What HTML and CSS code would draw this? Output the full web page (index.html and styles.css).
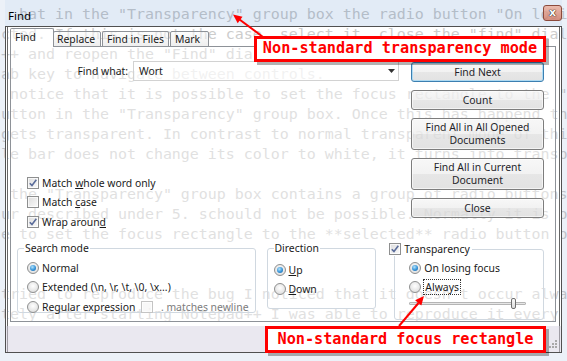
FILE: index.html
```html
<!DOCTYPE html>
<html>
<head>
<meta charset="utf-8">
<link rel="stylesheet" href="styles.css">
</head>
<body>
<pre class="doc">  hat in the "Transparency" group box the radio button "On losi
cted. If this is not the case, select it, close the "find" dial
++ and reopen the "Find" dialog. Then use the
ab key to navigate between controls.
 notice that it is possible to set the focus rectangle to the "
utton in the "Transparency" group box. Once this has happend th
gets transparent. In contrast to normal transparent mode of thi
le bar does not change its color to white, it turns into transp

 the "Transparency" group box contains a group of radio buttons
ur described under 5. schould not be possible. Normally it is o
e to set the focus rectangle to the **selected** radio button o


tried to reproduce the bug I noticed that it doesn't occur alwa
tely after starting Notepad++ I was able to reproduce it every</pre>

<div class="win">
  <div class="titlebar">
    <span class="title">Find</span>
    <span class="close">x</span>
  </div>
  <div class="client">
    <div class="tabs">
      <span class="tab active">Find</span>
      <span class="tab t-replace">Replace</span>
      <span class="tab t-files">Find in Files</span>
      <span class="tab t-mark">Mark</span>
    </div>
    <div class="panel">
      <div class="upper">
        <div class="left">
          <div class="findrow">
            <span class="findlabel">Find what:</span>
            <div class="combo">
              <span>Wort</span>
              <svg width="7" height="4" viewBox="0 0 7 4"><polygon points="0,0 7,0 3.5,4" fill="#333"/></svg>
            </div>
          </div>
          <div class="checks">
            <div class="check"><span class="cb"><svg width="10" height="10" viewBox="0 0 10 10"><path d="M1.8 5.2 L4 7.6 L8.3 1.8" fill="none" stroke="#5a6c9a" stroke-width="1.6"/></svg></span><span>Match <u>w</u>hole word only</span></div>
            <div class="check"><span class="cb"></span><span>Match <u>c</u>ase</span></div>
            <div class="check"><span class="cb"><svg width="10" height="10" viewBox="0 0 10 10"><path d="M1.8 5.2 L4 7.6 L8.3 1.8" fill="none" stroke="#5a6c9a" stroke-width="1.6"/></svg></span><span>Wrap aroun<u>d</u></span></div>
          </div>
        </div>
        <div class="buttons">
          <div class="btn default">Find Next</div>
          <div class="btn">Count</div>
          <div class="btn tall">Find All in All Opened<br>Documents</div>
          <div class="btn tall">Find All in Current<br>Document</div>
          <div class="btn">Close</div>
        </div>
      </div>
      <div class="groups">
        <fieldset class="g-search">
          <legend>Search mode</legend>
          <div class="radios">
            <div class="radio"><span class="rb on"></span><span>Normal</span></div>
            <div class="radio"><span class="rb"></span><span>Extended (\n, \r, \t, \0, \x...)</span></div>
            <div class="radio"><span class="rb"></span><span class="regtext">Regular expression</span><span class="cb small"></span><span class="nl">. matches newline</span></div>
          </div>
        </fieldset>
        <fieldset class="g-dir">
          <legend>Direction</legend>
          <div class="radios">
            <div class="radio"><span class="rb on"></span><span><u>U</u>p</span></div>
            <div class="radio"><span class="rb"></span><span><u>D</u>own</span></div>
          </div>
        </fieldset>
        <fieldset class="g-trans">
          <legend><span class="cb"><svg width="10" height="10" viewBox="0 0 10 10"><path d="M1.8 5.2 L4 7.6 L8.3 1.8" fill="none" stroke="#5a6c9a" stroke-width="1.6"/></svg></span><span>Transparency</span></legend>
          <div class="radios">
            <div class="radio"><span class="rb on"></span><span>On losing focus</span></div>
            <div class="radio"><span class="rb"></span><span class="focus">Always</span></div>
          </div>
          <div class="slider"><span class="track"></span><span class="thumb"></span></div>
        </fieldset>
      </div>
    </div>
    <div class="status">
      <svg width="10" height="10" viewBox="0 0 10 10" fill="#a8a8a8"><rect x="8" y="0" width="2" height="2"/><rect x="5" y="3" width="2" height="2"/><rect x="8" y="3" width="2" height="2"/><rect x="2" y="6" width="2" height="2"/><rect x="5" y="6" width="2" height="2"/><rect x="8" y="6" width="2" height="2"/></svg>
    </div>
  </div>
</div>

<div class="note note-top">Non-standard transparency mode</div>
<div class="note note-bottom">Non-standard focus rectangle</div>

<svg class="arrows" width="567" height="361" viewBox="0 0 567 361">
  <line x1="263" y1="37" x2="239.5" y2="19.5" stroke="#f00" stroke-width="2"/>
  <polygon points="233,14.5 242.5,16.8 237.7,23.2" fill="#f00"/>
  <line x1="399" y1="326" x2="418.5" y2="303" stroke="#f00" stroke-width="2"/>
  <polygon points="424,296 421.3,305.5 415.1,300.3" fill="#f00"/>
</svg>
</body>
</html>
```

FILE: styles.css
```css
* { box-sizing: border-box; }
html, body { margin: 0; padding: 0; }
body {
  width: 567px;
  height: 361px;
  overflow: hidden;
  position: relative;
  background: #fff;
  font-family: "Noto Sans", sans-serif;
}

.doc {
  margin: 0;
  padding: 4px 0 0 1px;
  font-family: "DejaVu Sans Mono", monospace;
  font-size: 14.95px;
  line-height: 20px;
  color: #ababab;
  white-space: pre;
}

/* window */
.win {
  position: absolute;
  left: 0;
  top: 0;
  width: 567px;
  height: 361px;
  display: flex;
  flex-direction: column;
  border-style: solid;
  border-color: rgba(212, 224, 240, 0.45);
  border-width: 0 5px 8px 5px;
}
.titlebar {
  height: 26px;
  flex: none;
  display: flex;
  align-items: center;
  justify-content: space-between;
  padding: 0 0 0 3px;
  background: rgba(190, 210, 235, 0.45);
}
.title {
  font-size: 11.5px;
  color: #000;
  margin-top: 4px;
}
.close {
  width: 19px;
  height: 16px;
  border: 1px solid #8b4a3c;
  border-radius: 3px;
  background: linear-gradient(rgba(236, 178, 160, 0.85), rgba(208, 120, 98, 0.8));
  color: #fff;
  font: bold 11px/1 "DejaVu Sans", sans-serif;
  display: flex;
  align-items: center;
  justify-content: center;
  text-shadow: 0 0 1px #000, 0 0 1px #000;
  padding-bottom: 2px;
}

.client {
  flex: 1;
  border: 1px solid #505050;
  box-shadow: inset 1px 0 0 #fff, inset 2px 0 0 #666, inset -1px 0 0 #fff, inset -2px 0 0 #666;
  background: rgba(255, 255, 255, 0.4);
  padding: 1px 5px 0 4px;
  display: flex;
  flex-direction: column;
}

/* tabs */
.tabs {
  display: flex;
  align-items: flex-end;
  height: 19px;
  flex: none;
  background: linear-gradient(#8e9298, #8e9298) no-repeat right bottom / calc(100% - 43px) 1px;
}
.tab {
  height: 16px;
  border: 1px solid #8e9298;
  border-radius: 2px 2px 0 0;
  background: linear-gradient(rgba(252, 252, 252, 0.55), rgba(224, 224, 224, 0.55));
  font-size: 10.4px;
  line-height: 13px;
  padding: 0 0 0 4px;
  color: #1a1a1a;
  display: flex;
  align-items: center;
  white-space: nowrap;
}
.tab.active {
  height: 19px;
  width: 44px;
  border-bottom: 0;
  background: rgba(255, 255, 255, 0.5);
  padding-bottom: 2px;
}
.t-replace { width: 48px; margin-left: -1px; padding-left: 3px; }
.t-files { width: 67px; margin-left: 1px; }
.t-mark { width: 39px; margin-left: 1px; }

/* panel */
.panel {
  height: 275px;
  flex: none;
  border: 1px solid #8e9298;
  border-top: 0;
  background: rgba(255, 255, 255, 0.4);
  padding: 14px 11px 0 0;
  display: flex;
  flex-direction: column;
  font-size: 10.4px;
  color: #1a1a1a;
}
.upper { display: flex; }
.left { flex: 1; }
.findrow {
  display: grid;
  grid-template-columns: 117px 266px;
  column-gap: 5px;
  align-items: center;
  height: 20px;
}
.findlabel { justify-self: end; }
.combo {
  height: 20px;
  border: 1px solid #d2d2d2;
  background: rgba(255, 255, 255, 0.55);
  display: flex;
  align-items: center;
  justify-content: space-between;
  padding: 0 3px 0 5px;
}
.checks {
  margin-top: 92px;
  display: flex;
  flex-direction: column;
  padding-left: 16px;
}
.check {
  height: 19.5px;
  display: flex;
  align-items: center;
  gap: 3px;
}

.cb {
  width: 12px;
  height: 12px;
  flex: none;
  border: 1px solid #8e8f8f;
  background: linear-gradient(135deg, #dcdcdc, #fbfbfb);
  box-shadow: inset 0 0 0 1px rgba(255, 255, 255, 0.7);
  display: flex;
  align-items: center;
  justify-content: center;
}
.cb.small {
  border-color: #c4c4c4;
  background: rgba(245, 245, 245, 0.7);
}
.rb {
  width: 12px;
  height: 12px;
  flex: none;
  border-radius: 50%;
  border: 1px solid #8e8f8f;
  background: radial-gradient(circle at 50% 40%, #fff, #d6d6d6);
  display: flex;
  align-items: center;
  justify-content: center;
}
.rb.on::after {
  content: "";
  width: 6px;
  height: 6px;
  border-radius: 50%;
  background: radial-gradient(circle at 40% 35%, #b4e3fb 0, #3593d8 55%, #145c9e 100%);
}

/* buttons */
.buttons {
  width: 133px;
  margin-top: 1px;
  display: flex;
  flex-direction: column;
  gap: 8px;
}
.btn {
  height: 20px;
  border: 1px solid #7d7d7d;
  border-radius: 3px;
  background: linear-gradient(rgba(244, 244, 244, 0.7) 0, rgba(236, 236, 236, 0.7) 50%, rgba(220, 220, 220, 0.7) 50%, rgba(214, 214, 214, 0.7) 100%);
  box-shadow: inset 0 0 0 1px rgba(255, 255, 255, 0.6);
  color: #1f1f2a;
  display: flex;
  align-items: center;
  justify-content: center;
  text-align: center;
  line-height: 13px;
}
.btn.tall { height: 32px; }
.btn.default {
  border-color: #3c7fb1;
  box-shadow: inset 0 0 0 1px rgba(160, 215, 245, 0.8);
}

/* group boxes */
.groups {
  display: flex;
  align-items: flex-start;
  margin-top: 9.5px;
  padding-left: 6px;
}
fieldset {
  margin: 0;
  border: 1px solid #d0d8e0;
  border-radius: 3px;
  padding: 0 6px;
  min-width: 0;
}
legend {
  padding: 0 1px;
  line-height: 14px;
}
.g-search { width: 239px; height: 72px; }
.g-dir { width: 110px; height: 68px; margin-left: 11px; }
.g-trans {
  width: 150px;
  height: 78px;
  margin-left: 18px;
  margin-top: 1px;
  padding-left: 0;
}
.g-trans legend {
  margin-left: -6px;
  padding: 0 2px 0 0;
  display: flex;
  align-items: center;
  gap: 3px;
}
.radios {
  display: flex;
  flex-direction: column;
  gap: 4px;
}
.g-search .radios { margin-top: 5px; padding-left: 3px; }
.g-dir .radios { margin-top: 7px; }
.g-trans .radios { margin-top: 4px; padding-left: 14px; }
.radio {
  height: 15.5px;
  display: flex;
  align-items: center;
  gap: 3px;
  white-space: nowrap;
}
.regtext { width: 105px; }
.nl { color: #7c7c7c; margin-left: 5px; }
.focus {
  outline: 1px dotted #333;
  padding: 0 1px;
  line-height: 14px;
}

.slider {
  position: relative;
  margin: 2px 0 0 14px;
  width: 117px;
  height: 13px;
}
.track {
  position: absolute;
  left: 0;
  top: 5px;
  width: 117px;
  height: 3px;
  border: 1px solid #b5b5b5;
  border-radius: 1px;
  background: #e6e6e6;
}
.thumb {
  position: absolute;
  left: 102px;
  top: 1px;
  width: 5px;
  height: 11px;
  border: 1px solid #6f6f6f;
  border-radius: 2px;
  background: linear-gradient(#fafafa, #dcdcdc);
}

/* status bar */
.status {
  margin: 4px -5px 0 -4px;
  height: 26px;
  background: rgba(214, 210, 226, 0.5);
  display: flex;
  justify-content: flex-end;
  align-items: flex-end;
  padding: 0 4px 2px 0;
}

/* annotations */
.note {
  position: absolute;
  background: #fff;
  border: 3px solid #f00;
  box-shadow: 3px 3px 0 rgba(0, 0, 0, 0.3);
  font-family: "DejaVu Sans Mono", monospace;
  font-weight: bold;
  font-size: 15.2px;
  line-height: 1;
  color: #f00;
  display: flex;
  align-items: center;
  justify-content: center;
  white-space: nowrap;
}
.note-top { left: 254px; top: 36px; width: 292px; height: 26px; }
.note-bottom { left: 265px; top: 326px; width: 281px; height: 27px; }
.arrows {
  position: absolute;
  left: 0;
  top: 0;
  pointer-events: none;
}
```
